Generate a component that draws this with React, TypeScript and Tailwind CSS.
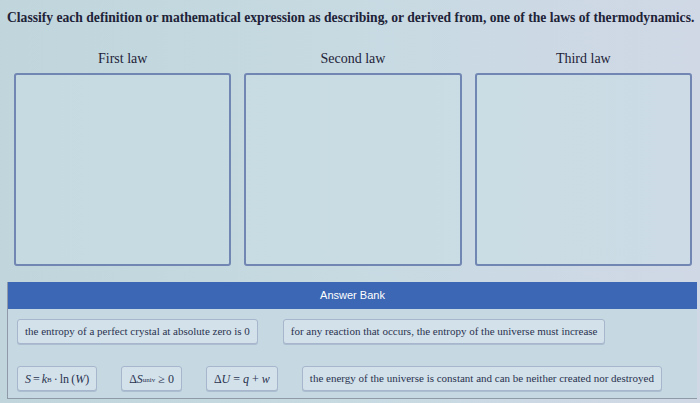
const laws = ['First law', 'Second law', 'Third law']

const serif = { fontFamily: '"Liberation Serif", "Times New Roman", serif' }

function Chip({ children, math = false }: { children: React.ReactNode; math?: boolean }) {
  return (
    <div
      className={
        math
          ? 'h-[25px] flex items-center px-[7px] rounded-[3px] border border-[#a7b6cc] bg-[#d3e1ea] text-[12px] text-[#2a3350] shadow-[0_1px_0_rgba(90,110,150,0.25)] whitespace-nowrap'
          : 'h-[25px] flex items-center px-[7px] rounded-[3px] border border-[#a7b6cc] bg-[#d3e1ea] text-[11px] text-[#2a3350] shadow-[0_1px_0_rgba(90,110,150,0.25)] whitespace-nowrap'
      }
    >
      {children}
    </div>
  )
}

export default function App() {
  return (
    <div
      className="w-[700px] h-[403px] overflow-hidden bg-gradient-to-r from-[#c0d5dc] via-[#c7dae2] to-[#d0d8e6]"
      style={serif}
    >
      {/* Prompt */}
      <h1 className="pt-[9px] pl-[7px] text-[13.6px] leading-[17px] font-bold text-[#1e2338] whitespace-nowrap">
        Classify each definition or mathematical expression as describing, or derived from, one of the laws of thermodynamics.
      </h1>

      {/* Drop targets */}
      <div className="grid grid-cols-3 gap-[13px] pl-[14px] pr-[8px] mt-[25px]">
        {laws.map((law) => (
          <div key={law} className="flex flex-col items-center">
            <div className="text-[14px] text-[#1e2338] leading-[16px]">{law}</div>
            <div className="mt-[6px] w-full h-[193px] rounded-[3px] border-2 border-[#7186b2] bg-[#c9dde4]/60" />
          </div>
        ))}
      </div>

      {/* Answer bank */}
      <div className="mt-[16px] ml-[7px] mr-[3px] border-l border-b border-[#8e9aa8] bg-[#c6d9e3]">
        <div
          className="h-[27px] flex items-center justify-center bg-[#3c67b4] text-white text-[11px]"
          style={{ fontFamily: '"Liberation Sans", Arial, sans-serif' }}
        >
          Answer Bank
        </div>
        <div className="flex flex-col gap-[22px] pt-[10px] pb-[7px] pl-[9px]">
          <div className="flex gap-[25px]">
            <Chip>the entropy of a perfect crystal at absolute zero is 0</Chip>
            <Chip>for any reaction that occurs, the entropy of the universe must increase</Chip>
          </div>
          <div className="flex gap-[24px]">
            <Chip math>
              <span className="italic">S</span>
              <span className="mx-[2px]">=</span>
              <span className="italic">k</span>
              <sub className="text-[7px]">B</sub>
              <span className="mx-[2px]">·</span>
              <span>ln</span>
              <span className="ml-[2px]">(</span>
              <span className="italic">W</span>
              <span>)</span>
            </Chip>
            <Chip math>
              <span>Δ</span>
              <span className="italic">S</span>
              <sub className="text-[7px]">univ</sub>
              <span className="mx-[3px]">≥</span>
              <span>0</span>
            </Chip>
            <Chip math>
              <span>Δ</span>
              <span className="italic">U</span>
              <span className="mx-[3px]">=</span>
              <span className="italic">q</span>
              <span className="mx-[3px]">+</span>
              <span className="italic">w</span>
            </Chip>
            <Chip>the energy of the universe is constant and can be neither created nor destroyed</Chip>
          </div>
        </div>
      </div>
    </div>
  )
}
